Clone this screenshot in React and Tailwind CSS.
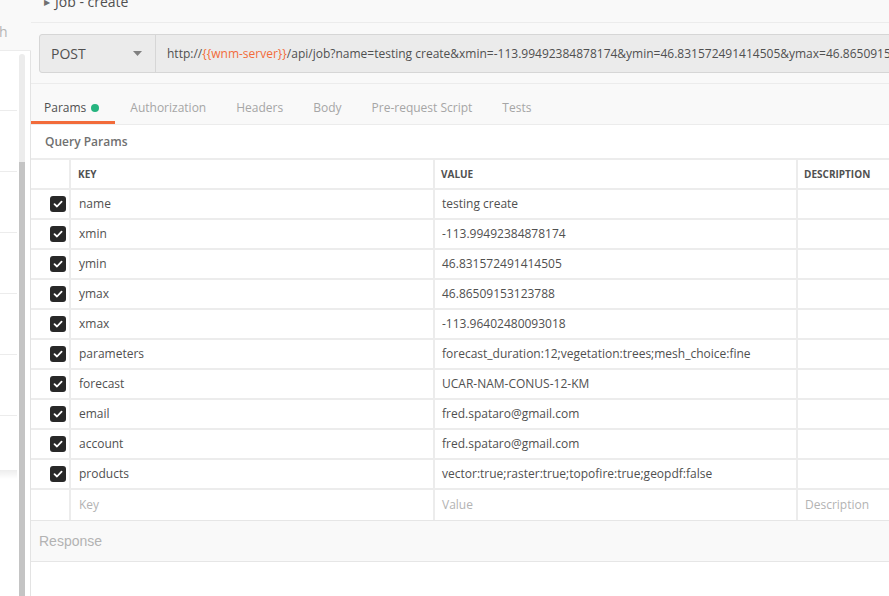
const params = [
  { key: "name", value: "testing create" },
  { key: "xmin", value: "-113.99492384878174" },
  { key: "ymin", value: "46.831572491414505" },
  { key: "ymax", value: "46.86509153123788" },
  { key: "xmax", value: "-113.96402480093018" },
  { key: "parameters", value: "forecast_duration:12;vegetation:trees;mesh_choice:fine" },
  { key: "forecast", value: "UCAR-NAM-CONUS-12-KM" },
  { key: "email", value: "fred.spataro@gmail.com" },
  { key: "account", value: "fred.spataro@gmail.com" },
  { key: "products", value: "vector:true;raster:true;topofire:true;geopdf:false" },
];

const tabs = ["Params", "Authorization", "Headers", "Body", "Pre-request Script", "Tests"];

const cols = "grid grid-cols-[40px_364px_363px_160px]";

const Checkbox = () => (
  <span className="w-4 h-4 rounded-[3px] bg-[#282828] flex items-center justify-center">
    <svg width="10" height="10" viewBox="0 0 10 10">
      <path d="M1.5 5.2 L4 7.5 L8.6 2.6" fill="none" stroke="white" strokeWidth="1.8" strokeLinecap="round" strokeLinejoin="round" />
    </svg>
  </span>
);

export default function App() {
  return (
    <div className="w-[889px] h-[596px] overflow-hidden flex bg-white text-[#505050] font-['Open_Sans',sans-serif]">
      {/* Sidebar */}
      <div className="w-[31px] min-w-[31px] shrink-0 flex flex-col">
        <div className="h-[51px] shrink-0 bg-[#f9f9f9] border-b border-[#ececec] flex items-center pt-[12px] text-[14px] text-[#b5b5b5] overflow-hidden">
          <span className="-ml-[1px]">h</span>
        </div>
        <div className="flex-1 flex flex-row">
          <div className="w-[17px] min-w-[17px] flex flex-col">
            <div className="h-[60px] shrink-0 border-b border-[#ececec]" />
            <div className="h-[61px] shrink-0 border-b border-[#ececec]" />
            <div className="h-[61px] shrink-0 border-b border-[#ececec]" />
            <div className="h-[61px] shrink-0 border-b border-[#ececec]" />
            <div className="h-[61px] shrink-0 border-b border-[#ececec]" />
            <div className="h-[61px] shrink-0 border-b border-[#ececec]" />
            <div className="h-[54px] shrink-0" />
            <div className="h-[9px] shrink-0 bg-gradient-to-b from-[#ededed] to-white" />
          </div>
          <div className="w-[2px] min-w-[2px]" />
          <div className="w-[6px] min-w-[6px] flex flex-col pt-[3px]">
            <div className="h-[108px] shrink-0 bg-[#ececec] rounded-t-[3px]" />
            <div className="flex-1 bg-[#c4c4c4]" />
          </div>
          <div className="flex-1 border-r border-[#e3e3e3]" />
        </div>
      </div>

      {/* Main */}
      <div className="flex-1 min-w-0 overflow-hidden flex flex-col">
        <div className="h-[23px] shrink-0 bg-[#f9f9f9] border-b border-[#ececec] flex items-end pb-[10px] pl-[13px] overflow-hidden">
          <span className="leading-[20px] text-[14px] text-[#505050] flex items-center gap-[5px] whitespace-nowrap">
            <span className="text-[8px] text-[#707070]">▶</span>
            Job - create
          </span>
        </div>

        <div className="h-[61px] shrink-0 bg-[#f9f9f9] border-b border-[#ececec] pt-[11px] pl-[8px]">
          <div className="flex h-[39px] w-[1100px] border border-[#d6d6d6] rounded-[3px] bg-[#ebebeb]">
            <div className="w-[116px] shrink-0 flex items-center justify-between pl-[11px] pr-[13px] border-r border-[#d6d6d6] text-[14px] text-[#505050]">
              <span>POST</span>
              <svg width="9" height="5" viewBox="0 0 9 5">
                <path d="M0 0 L9 0 L4.5 5 Z" fill="#808080" />
              </svg>
            </div>
            <div className="flex items-center pl-[11px] text-[12px] text-[#505050] whitespace-nowrap">
              http://<span className="text-[#f26b3a]">{"{{wnm-server}}"}</span>/api/job?name=testing create&amp;xmin=-113.99492384878174&amp;ymin=46.831572491414505&amp;ymax=46.86509153123788&amp;xmax=-113.96402480093018
            </div>
          </div>
        </div>

        <div className="h-[41px] shrink-0 bg-[#f9f9f9] border-b border-[#ececec] flex items-stretch text-[12px]">
          {tabs.map((t) => (
            <div
              key={t}
              className={`flex items-center gap-[5px] whitespace-nowrap pt-[10px] border-b-[3px] ${
                t === "Params" ? "pl-[13px] pr-[16px] border-[#f26b3a] text-[#505050]" : "px-[15px] border-transparent text-[#a6a6a6]"
              }`}
            >
              {t}
              {t === "Params" && <span className="w-2 h-2 rounded-full bg-[#26b47f]" />}
            </div>
          ))}
        </div>

        <div className="h-[33px] shrink-0 flex items-center pl-[14px] text-[12px] font-semibold text-[#707070]">
          Query Params
        </div>

        <div className="shrink-0 w-[930px] text-[12px]">
          <div className={`${cols} h-[32px] border-y-2 border-[#ececec] text-[10px] font-bold text-[#505050]`}>
            <div className="border-r-2 border-[#ececec]" />
            <div className="flex items-center pl-[7px] border-r-2 border-[#ececec]">KEY</div>
            <div className="flex items-center pl-[6px] border-r-2 border-[#ececec]">VALUE</div>
            <div className="flex items-center pl-[6px]">DESCRIPTION</div>
          </div>
          {params.map((p) => (
            <div key={p.key} className={`${cols} h-[30px] border-b-2 border-[#ececec]`}>
              <div className="flex items-center justify-end pr-[3px] border-r-2 border-[#ececec]">
                <Checkbox />
              </div>
              <div className="flex items-center pl-[8px] border-r-2 border-[#ececec] whitespace-nowrap">{p.key}</div>
              <div className="flex items-center pl-[7px] border-r-2 border-[#ececec] whitespace-nowrap">{p.value}</div>
              <div />
            </div>
          ))}
          <div className={`${cols} h-[30px] text-[#b3b3b3]`}>
            <div className="border-r-2 border-[#ececec]" />
            <div className="flex items-center pl-[8px] border-r-2 border-[#ececec]">Key</div>
            <div className="flex items-center pl-[7px] border-r-2 border-[#ececec]">Value</div>
            <div className="flex items-center pl-[7px]">Description</div>
          </div>
        </div>

        <div className="h-[42px] shrink-0 bg-[#f9f9f9] border-y border-[#e6e6e6] flex items-center pl-[8px] text-[14px] text-[#b3b3b3] font-['Liberation_Sans',sans-serif]">
          Response
        </div>
        <div className="flex-1 bg-white" />
      </div>
    </div>
  );
}
